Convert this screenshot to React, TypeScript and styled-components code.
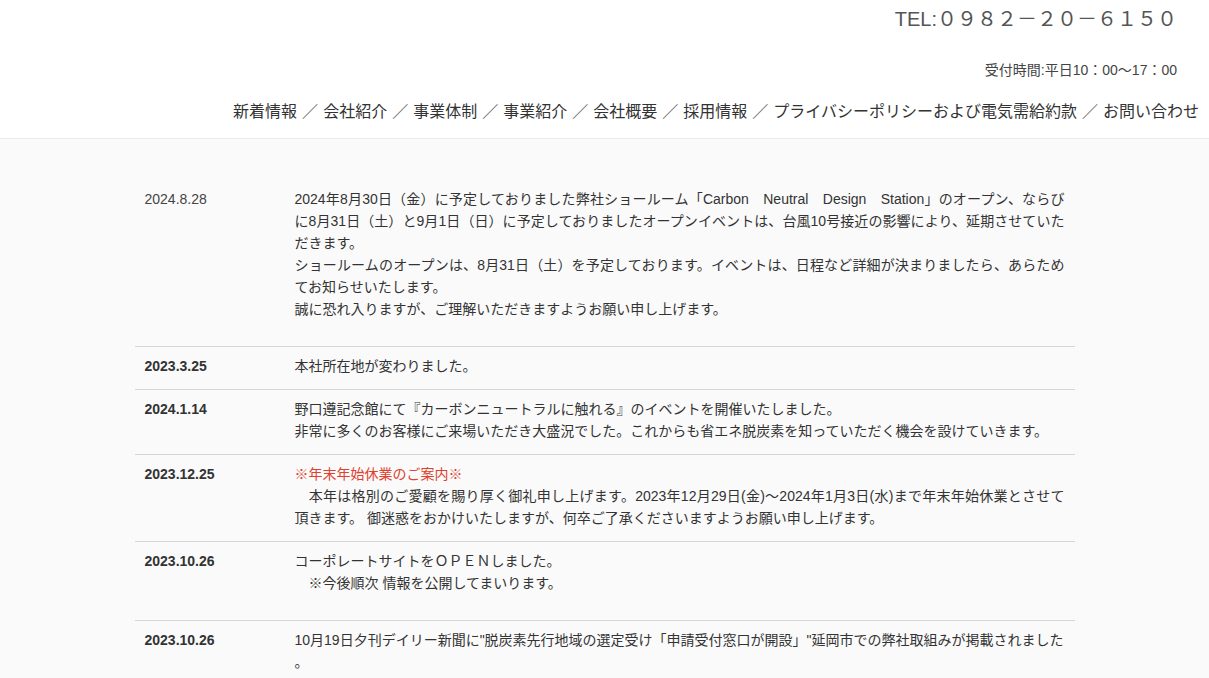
import styled, { createGlobalStyle } from 'styled-components';

const GlobalStyle = createGlobalStyle`
  html, body {
    margin: 0;
    padding: 0;
  }
  body {
    background: #fafafa;
    color: #333;
    font-family: 'Liberation Sans', 'Noto Sans CJK JP', sans-serif;
  }
`;

type NewsItem = {
  date: string;
  bold: boolean;
  extra?: boolean;
  lines: { text: string; red?: boolean }[];
};

const navItems = [
  '新着情報',
  '会社紹介',
  '事業体制',
  '事業紹介',
  '会社概要',
  '採用情報',
  'プライバシーポリシーおよび電気需給約款',
  'お問い合わせ',
];

const news: NewsItem[] = [
  {
    date: '2024.8.28',
    bold: false,
    extra: true,
    lines: [
      {
        text: '2024年8月30日（金）に予定しておりました弊社ショールーム「Carbon　Neutral　Design　Station」のオープン、ならびに8月31日（土）と9月1日（日）に予定しておりましたオープンイベントは、台風10号接近の影響により、延期させていただきます。',
      },
      {
        text: 'ショールームのオープンは、8月31日（土）を予定しております。イベントは、日程など詳細が決まりましたら、あらためてお知らせいたします。',
      },
      { text: '誠に恐れ入りますが、ご理解いただきますようお願い申し上げます。' },
    ],
  },
  {
    date: '2023.3.25',
    bold: true,
    lines: [{ text: '本社所在地が変わりました。' }],
  },
  {
    date: '2024.1.14',
    bold: true,
    lines: [
      { text: '野口遵記念館にて『カーボンニュートラルに触れる』のイベントを開催いたしました。' },
      { text: '非常に多くのお客様にご来場いただき大盛況でした。これからも省エネ脱炭素を知っていただく機会を設けていきます。' },
    ],
  },
  {
    date: '2023.12.25',
    bold: true,
    lines: [
      { text: '※年末年始休業のご案内※', red: true },
      {
        text: '　本年は格別のご愛顧を賜り厚く御礼申し上げます。2023年12月29日(金)～2024年1月3日(水)まで年末年始休業とさせて頂きます。 御迷惑をおかけいたしますが、何卒ご了承くださいますようお願い申し上げます。',
      },
    ],
  },
  {
    date: '2023.10.26',
    bold: true,
    extra: true,
    lines: [
      { text: 'コーポレートサイトをＯＰＥＮしました。' },
      { text: '　※今後順次 情報を公開してまいります。' },
    ],
  },
  {
    date: '2023.10.26',
    bold: true,
    lines: [
      {
        text: '10月19日夕刊デイリー新聞に"脱炭素先行地域の選定受け「申請受付窓口が開設」"延岡市での弊社取組みが掲載されました',
      },
      { text: '。' },
    ],
  },
];

function App() {
  return (
    <>
      <GlobalStyle />
      <Header>
        <Contact>
          <Tel>TEL:０９８２－２０－６１５０</Tel>
          <Hours>受付時間:平日10：00〜17：00</Hours>
        </Contact>
        <Nav>
          {navItems.map((item, i) => (
            <span key={item}>
              <NavLink href='#'>{item}</NavLink>
              {i < navItems.length - 1 ? <Sep>／</Sep> : null}
            </span>
          ))}
        </Nav>
      </Header>
      <Main>
        <NewsTable>
          {news.map((item, i) => (
            <Row key={i} first={i === 0} extra={!!item.extra}>
              <DateCell bold={item.bold}>{item.date}</DateCell>
              <Body>
                {item.lines.map((line, j) => (
                  <Line key={j} red={!!line.red}>
                    {line.text}
                  </Line>
                ))}
              </Body>
            </Row>
          ))}
        </NewsTable>
      </Main>
    </>
  );
}

const Header = styled.header`
  background: #fff;
  height: 138px;
  border-bottom: 1px solid #ebebeb;
  display: flex;
  flex-direction: column;
  align-items: flex-end;
`;

const Contact = styled.div`
  display: flex;
  flex-direction: column;
  align-items: flex-end;
  padding-right: 32px;
`;

const Tel = styled.div`
  font-size: 20px;
  line-height: 24px;
  margin-top: 7px;
  color: #555;
`;

const Hours = styled.div`
  font-size: 14px;
  line-height: 18px;
  margin-top: 30px;
  color: #444;
`;

const Nav = styled.nav`
  margin-top: 21px;
  padding-right: 10px;
  font-size: 16px;
  line-height: 24px;
  white-space: nowrap;
`;

const NavLink = styled.a`
  color: #333;
  text-decoration: none;
`;

const Sep = styled.span`
  color: #555;
  margin: 0 5px;
`;

const Main = styled.main`
  padding-top: 41px;
`;

const NewsTable = styled.div`
  width: 940px;
  margin: 0 auto;
`;

const Row = styled.div<{ first: boolean; extra: boolean }>`
  display: grid;
  grid-template-columns: 150px 1fr;
  border-top: ${(p) => (p.first ? 'none' : '1px solid #d6d6d6')};
  padding-bottom: ${(p) => (p.extra ? '14px' : '0')};
`;

const DateCell = styled.div<{ bold: boolean }>`
  padding: 8px 10px 12px;
  font-size: 14px;
  line-height: 22px;
  font-weight: ${(p) => (p.bold ? 700 : 400)};
  color: ${(p) => (p.bold ? '#333' : '#444')};
`;

const Body = styled.div`
  padding: 8px 10px 12px;
  font-size: 14px;
  line-height: 22px;
  text-align: justify;
  color: #333;
`;

const Line = styled.p<{ red: boolean }>`
  margin: 0;
  color: ${(p) => (p.red ? '#e0402e' : 'inherit')};
`;

export default App;
